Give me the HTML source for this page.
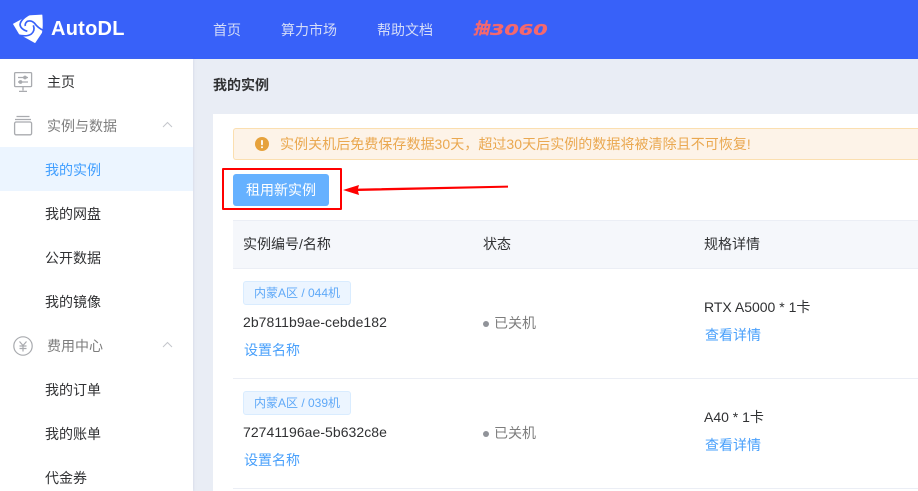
<!DOCTYPE html>
<html lang="zh"><head><meta charset="utf-8"><style>
*{box-sizing:border-box;margin:0;padding:0}
html,body{width:918px;height:491px;overflow:hidden;background:#e9edf5;font-family:"Liberation Sans","Noto Sans CJK SC",sans-serif;font-size:14px;color:#303133}
.a{position:absolute;white-space:nowrap;line-height:20px}
#hd{position:absolute;left:0;top:0;width:918px;height:59px;background:#3861f9}
#sb{position:absolute;left:0;top:59px;width:193px;height:432px;background:#fff;box-shadow:0 0 3px rgba(120,130,170,.25)}
#card{position:absolute;left:213px;top:114px;width:705px;height:377px;background:#fff}
.nav{color:#d4dcf8}
.gr{color:#7d7d7d}
.blue{color:#49a0fb}
.tag{position:absolute;left:243px;width:108px;height:24px;background:#ecf5ff;border:1px solid #d9ecff;border-radius:3px;color:#5fa9f8;font-size:12px;line-height:22px;text-align:center;white-space:nowrap}
.line{position:absolute;left:233px;width:685px;height:1px;background:#ebeef5}
.dot{position:absolute;left:483px;width:6px;height:6px;border-radius:50%;background:#909399}
</style></head><body>
<div id="hd">
<svg class="a" style="left:12px;top:14px" width="32" height="30" viewBox="36 42 96 90"><path d="M40 72L86 47L126 45Q129 80 125 98L105 128L58 102Z" fill="#fff" stroke="#fff" stroke-width="2" stroke-linejoin="round"/><g fill="none" stroke="#3861f9" stroke-width="5"><path d="M94 40Q62 56 60 74Q62 88 82 94"/><path d="M50 104Q80 112 94 102Q106 92 100 76"/><path d="M132 92Q114 84 104 70Q94 60 82 64Q74 70 76 78"/></g></svg>
<div class="a" style="left:51px;top:15px;color:#fff;font-size:20px;font-weight:700;line-height:28px;letter-spacing:.25px">AutoDL</div>
<div class="a nav" style="left:213px;top:20px">首页</div>
<div class="a nav" style="left:281px;top:20px">算力市场</div>
<div class="a nav" style="left:377px;top:20px">帮助文档</div>
<div class="a" style="left:473px;top:19px;color:#f4686e;font-size:16px;font-weight:700;font-style:italic;line-height:22px;-webkit-text-stroke:.3px #f4686e">抽</div>
<div class="a" style="left:490px;top:19px;color:#f4686e;font-size:15px;font-weight:700;font-style:italic;line-height:22px;font-family:'DejaVu Sans',sans-serif;transform:scaleX(1.38);transform-origin:0 0;-webkit-text-stroke:.3px #f4686e">3060</div>
</div>
<div id="sb"></div>
<div class="a" style="left:0;top:147px;width:193px;height:44px;background:#ecf5ff"></div>
<svg class="a" style="left:13px;top:71px" width="20" height="22" viewBox="0 0 20 22" fill="none" stroke="#a9abaf" stroke-width="1.3"><rect x="1.6" y="1.6" width="17" height="14" rx="1"/><path d="M10 16v3.5M6 20.4h8M5 6.5h10M5 11h10"/><circle cx="12" cy="6.5" r="1.2" fill="#a9abaf"/><circle cx="7.5" cy="11" r="1.2" fill="#a9abaf"/></svg>
<div class="a" style="left:47px;top:72px">主页</div>
<svg class="a" style="left:13px;top:115px" width="20" height="21" viewBox="0 0 20 21" fill="none" stroke="#a9abaf" stroke-width="1.3"><path d="M3.5 1.5h13M2 4.5h16"/><rect x="1.6" y="7" width="17" height="12.8" rx="1.5"/></svg>
<div class="a gr" style="left:47px;top:116px">实例与数据</div>
<svg class="a" style="left:162px;top:121px" width="11" height="7" viewBox="0 0 11 7" fill="none" stroke="#c4c7cc"><path d="M1 6L5.5 1.5L10 6"/></svg>
<div class="a" style="left:45px;top:160px;color:#409eff">我的实例</div>
<div class="a" style="left:45px;top:204px">我的网盘</div>
<div class="a" style="left:45px;top:248px">公开数据</div>
<div class="a" style="left:45px;top:292px">我的镜像</div>
<svg class="a" style="left:13px;top:336px" width="20" height="20" viewBox="0 0 20 20" fill="none" stroke="#a9abaf" stroke-width="1.2"><circle cx="10" cy="10" r="9.2"/><path d="M6.5 5.5L10 9.5L13.5 5.5M6.5 10h7M6.5 12.5h7M10 9.5V15.5"/></svg>
<div class="a gr" style="left:47px;top:336px">费用中心</div>
<svg class="a" style="left:162px;top:341px" width="11" height="7" viewBox="0 0 11 7" fill="none" stroke="#c4c7cc"><path d="M1 6L5.5 1.5L10 6"/></svg>
<div class="a" style="left:45px;top:380px">我的订单</div>
<div class="a" style="left:45px;top:424px">我的账单</div>
<div class="a" style="left:45px;top:468px">代金券</div>

<div class="a" style="left:213px;top:75px;font-weight:700;color:#303133">我的实例</div>
<div id="card"></div>
<div class="a" style="left:233px;top:128px;width:685px;height:32px;background:#fdf3e8;border:1px solid #fbdfb0;border-right:0;border-radius:3px 0 0 3px"></div>
<svg class="a" style="left:255px;top:137px" width="14" height="14" viewBox="0 0 14 14"><circle cx="7" cy="7" r="7" fill="#e6a23c"/><rect x="6.1" y="3" width="1.8" height="5.2" rx=".8" fill="#fff"/><circle cx="7" cy="10.3" r="1" fill="#fff"/></svg>
<div class="a" style="left:280px;top:134px;color:#eaa850;letter-spacing:.05px">实例关机后免费保存数据30天，超过30天后实例的数据将被清除且不可恢复!</div>
<div class="a" style="left:233px;top:174px;width:96px;height:32px;background:#66b1ff;border-radius:3px;color:#fff;text-align:center;line-height:32px">租用新实例</div>
<div class="a" style="left:222px;top:168px;width:120px;height:42px;border:2px solid #f00;border-radius:1px"></div>
<svg class="a" style="left:342px;top:180px" width="170" height="20" viewBox="0 0 170 20"><path d="M1 10L17 5L16 8.6L166 5.6L166 7.6L16 11L17 15Z" fill="#f00"/></svg>

<div class="a" style="left:233px;top:220px;width:685px;height:49px;background:#f5f7fb;border-top:1px solid #ebeef5;border-bottom:1px solid #ebeef5"></div>
<div class="a" style="left:243px;top:234px">实例编号/名称</div>
<div class="a" style="left:483px;top:234px">状态</div>
<div class="a" style="left:704px;top:234px">规格详情</div>

<div class="tag" style="top:281px">内蒙A区 / 044机</div>
<div class="a" style="left:243px;top:312px;letter-spacing:.05px">2b7811b9ae-cebde182</div>
<div class="a blue" style="left:245px;top:340px;margin-left:-1px">设置名称</div>
<div class="dot" style="top:321px"></div>
<div class="a gr" style="left:494px;top:313px">已关机</div>
<div class="a" style="left:704px;top:297px">RTX A5000 * 1卡</div>
<div class="a blue" style="left:705px;top:325px">查看详情</div>
<div class="line" style="top:378px"></div>

<div class="tag" style="top:391px">内蒙A区 / 039机</div>
<div class="a" style="left:243px;top:422px;letter-spacing:.05px">72741196ae-5b632c8e</div>
<div class="a blue" style="left:245px;top:450px;margin-left:-1px">设置名称</div>
<div class="dot" style="top:431px"></div>
<div class="a gr" style="left:494px;top:423px">已关机</div>
<div class="a" style="left:704px;top:407px">A40 * 1卡</div>
<div class="a blue" style="left:705px;top:435px">查看详情</div>
<div class="line" style="top:488px"></div>
</body></html>
